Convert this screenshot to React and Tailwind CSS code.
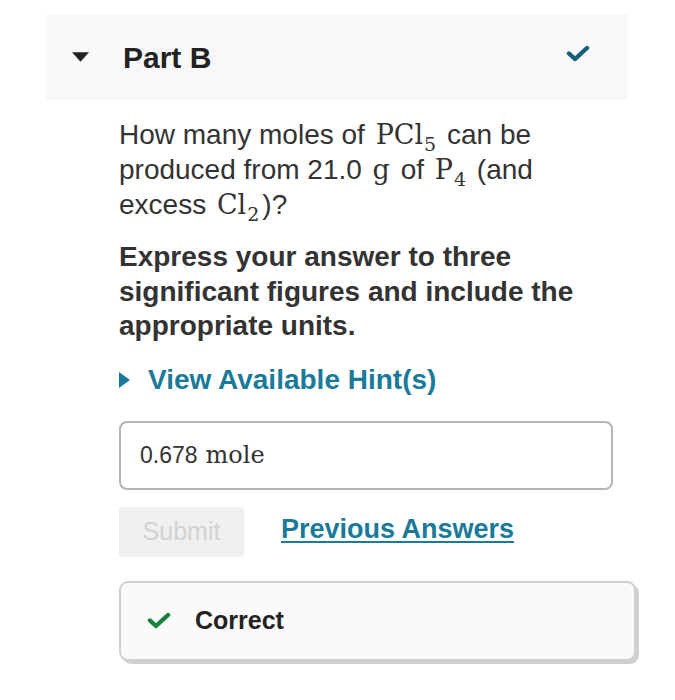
const Check = ({ className }) => (
    <svg viewBox="0 0 24 17" className={className} fill="none">
        <path d="M3 8.5 L9 14 L21 3" stroke="currentColor" strokeWidth="4.4" strokeLinecap="round" strokeLinejoin="round" />
    </svg>
);

const M = ({ children }) => (
    <span className="text-[27px] mx-[3px]" style={{ fontFamily: '"DejaVu Serif", "Liberation Serif", serif' }}>{children}</span>
);

const Sub = ({ children }) => <sub className="text-[19px] align-[-2px] ml-[1px]">{children}</sub>;

const App = () => {
    return (
        <div className="w-[675px] h-[700px] bg-white font-['Liberation_Sans',Arial,sans-serif] text-[#333] pt-[14px]">
            <div className="ml-[46px] w-[582px] h-[86px] bg-[#f8f8f8] flex items-center">
                <svg viewBox="0 0 18 10" className="w-[17px] h-[10px] ml-[26px] text-[#222]">
                    <path d="M0 0 H18 L9 10 Z" fill="currentColor" />
                </svg>
                <h2 className="ml-[34px] text-[30px] font-bold text-[#222] leading-none mt-[1px]">Part B</h2>
                <Check className="w-[24px] h-[17px] ml-auto mr-[38px] text-[#155f7d] mt-[-8px]" />
            </div>

            <div className="ml-[119px]">
                <p className="mt-[17px] w-[460px] text-[28px] leading-[35px]">
                    How many moles of <M>PCl<Sub>5</Sub></M> can be produced from 21.0 <M>g</M> of <M>P<Sub>4</Sub></M> (and excess <M>Cl<Sub>2</Sub></M>)?
                </p>

                <p className="mt-[18px] w-[500px] text-[28px] leading-[34.5px] font-bold text-[#333]">
                    Express your answer to three significant figures and include the appropriate units.
                </p>

                <div className="mt-[22px] flex items-center">
                    <svg viewBox="0 0 11 16" className="w-[11px] h-[16px] text-[#1a7a99]">
                        <path d="M0 0 L11 8 L0 16 Z" fill="currentColor" />
                    </svg>
                    <span className="ml-[18px] text-[28px] font-bold text-[#1a7a99] leading-none">View Available Hint(s)</span>
                </div>

                <div className="mt-[27px] w-[494px] h-[69px] border-2 border-[#b5b5b5] rounded-[8px] flex items-center pl-[19px] text-[#333]">
                    <span className="text-[23px]">0.678</span>
                    <span className="ml-[8px] text-[24px]" style={{ fontFamily: '"DejaVu Serif", "Liberation Serif", serif' }}>mole</span>
                </div>

                <div className="mt-[17px] flex items-center">
                    <div className="w-[125px] h-[50px] bg-[#f0f0f0] rounded-[3px] flex items-center justify-center text-[25px] text-[#d2d2d2]">
                        Submit
                    </div>
                    <a className="ml-[37px] text-[27px] font-bold text-[#1a7a99] underline decoration-2 underline-offset-[3px] -mt-[4px]">
                        Previous Answers
                    </a>
                </div>

                <div className="mt-[24px] w-[517px] h-[80px] border-2 border-[#cfcfcf] rounded-[9px] bg-[#fafafa] shadow-[3px_3px_0_#d0d0d0] flex items-center">
                    <Check className="w-[24px] h-[17px] ml-[26px] text-[#16823a]" />
                    <span className="ml-[24px] text-[25px] font-bold text-[#222]">Correct</span>
                </div>
            </div>
        </div>
    );
};

export default App;
